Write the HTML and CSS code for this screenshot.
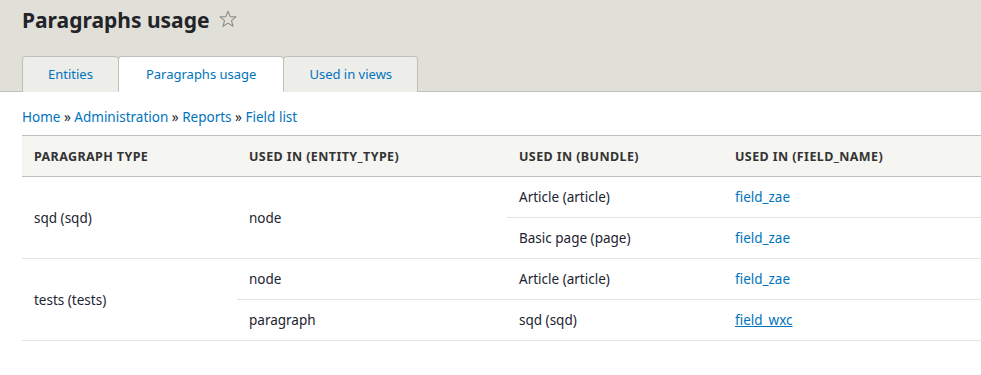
FILE: index.html
```html
<!DOCTYPE html>
<html>
<head>
  <link rel="stylesheet" href="styles.css">
</head>
<body>
  <div class="header">
    <h1 class="page-title">
      Paragraphs usage
      <svg class="star" width="18" height="18" viewBox="0 0 18 18">
        <polygon points="9,1.2 11.2,6.6 17,6.9 12.5,10.6 14,16.3 9,13.1 4,16.3 5.5,10.6 1,6.9 6.8,6.6" fill="none" stroke="#8e8e86" stroke-width="1.1" stroke-linejoin="round"/>
      </svg>
    </h1>
    <ul class="tabs">
      <li class="tab"><a href="#">Entities</a></li>
      <li class="tab active"><a href="#">Paragraphs usage</a></li>
      <li class="tab"><a href="#">Used in views</a></li>
    </ul>
  </div>

  <div class="content">
    <div class="breadcrumb">
      <a href="#">Home</a> » <a href="#">Administration</a> » <a href="#">Reports</a> » <a href="#">Field list</a>
    </div>

    <table class="usage">
      <thead>
        <tr>
          <th class="col-type">Paragraph type</th>
          <th class="col-entity">Used in (entity_type)</th>
          <th class="col-bundle">Used in (bundle)</th>
          <th>Used in (field_name)</th>
        </tr>
      </thead>
      <tbody>
        <tr>
          <td rowspan="2">sqd (sqd)</td>
          <td rowspan="2">node</td>
          <td>Article (article)</td>
          <td><a href="#">field_zae</a></td>
        </tr>
        <tr>
          <td>Basic page (page)</td>
          <td><a href="#">field_zae</a></td>
        </tr>
        <tr>
          <td rowspan="2">tests (tests)</td>
          <td>node</td>
          <td>Article (article)</td>
          <td><a href="#">field_zae</a></td>
        </tr>
        <tr>
          <td>paragraph</td>
          <td>sqd (sqd)</td>
          <td><a href="#" class="hover">field_wxc</a></td>
        </tr>
      </tbody>
    </table>
  </div>
</body>
</html>
```

FILE: styles.css
```css
body {
  margin: 0;
  font-family: "Noto Sans", "DejaVu Sans", sans-serif;
  font-size: 13.5px;
  color: #222330;
  background: white;
}

a {
  color: #0074bd;
  text-decoration: none;
}

a.hover {
  text-decoration: underline;
}

.header {
  background: #e0e0d8;
  padding: 7px 22px 0;
  border-bottom: 1px solid #bfbfba;
}

.page-title {
  margin: 0;
  font-size: 21px;
  line-height: 26px;
  font-weight: bold;
  color: #232429;
  display: flex;
  align-items: center;
  gap: 9px;
}

.star {
  margin-top: -2px;
}

.tabs {
  list-style: none;
  margin: 23px 0 -1px;
  padding: 0;
  display: flex;
}

.tab {
  background: #ededea;
  border: 1px solid #bfbfba;
  border-bottom: none;
  border-radius: 4px 4px 0 0;
  margin-right: -1px;
}

.tab a {
  display: block;
  height: 34px;
  line-height: 34px;
  padding: 0 25px;
  font-size: 13px;
}

.tab.active {
  background: white;
  position: relative;
  z-index: 1;
  border-bottom: 1px solid white;
}

.tab.active a {
  padding: 0 27px;
}

.content {
  padding: 0 0 0 22px;
}

.breadcrumb {
  padding: 15px 0 8px;
  line-height: 20px;
}

.usage {
  width: 100%;
  border-collapse: collapse;
}

.usage th {
  background: #f5f5f2;
  border-top: 1px solid #bfbfba;
  border-bottom: 1px solid #bfbfba;
  text-align: left;
  text-transform: uppercase;
  font-size: 12.5px;
  letter-spacing: 0.4px;
  font-weight: bold;
  color: #333;
  height: 40px;
  padding: 0 12px;
}

.col-type {
  width: 191px;
}

.col-entity {
  width: 246px;
}

.col-bundle {
  width: 192px;
}

.usage td {
  border-bottom: 1px solid #e4e3de;
  height: 40px;
  padding: 0 12px;
  vertical-align: middle;
}
```
